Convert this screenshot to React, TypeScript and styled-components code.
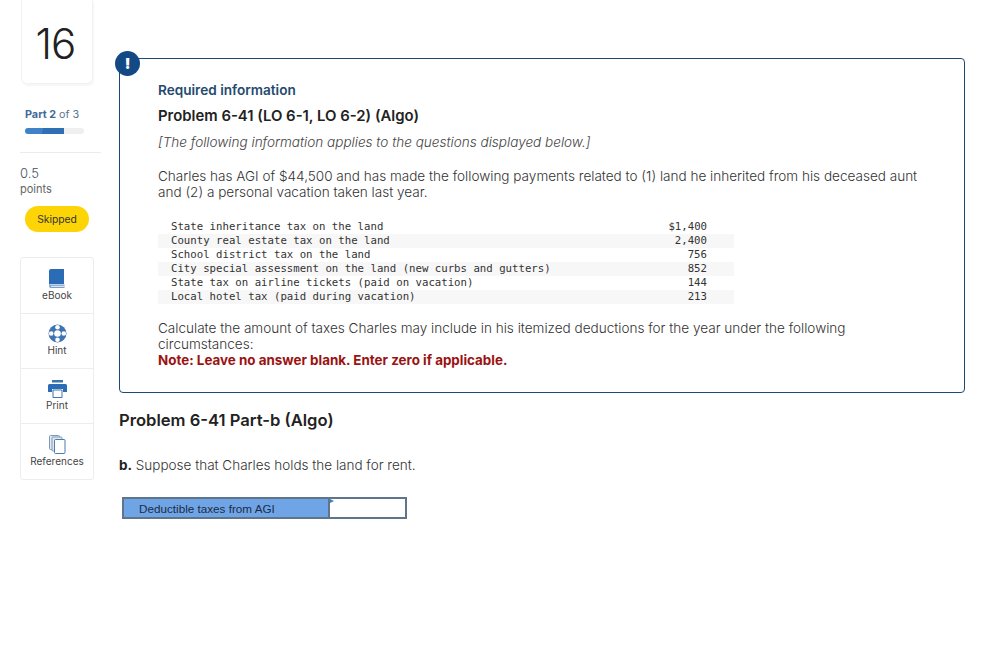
import React from "react";
import styled, { createGlobalStyle } from "styled-components";

const Global = createGlobalStyle`
  html, body { margin: 0; padding: 0; background: #fff; }
  body { font-family: "Inter", "Lato", sans-serif; color: #333; }
`;

const Page = styled.div`
  width: 1006px;
  height: 651px;
  display: flex;
  align-items: flex-start;
  overflow: hidden;
`;

const Side = styled.aside`
  width: 119px;
  flex: none;
  display: flex;
  flex-direction: column;
`;

const NumberCard = styled.div`
  width: 72px;
  height: 84px;
  margin-left: 21px;
  padding: 3px 3px 0 0;
  box-sizing: border-box;
  border: 1px solid #f2f2f2;
  border-top: none;
  border-radius: 0 0 6px 6px;
  box-shadow: 1px 2px 2px rgba(0, 0, 0, 0.04);
  display: flex;
  align-items: center;
  justify-content: center;
  font-size: 42px;
  font-weight: 300;
  color: #222;
  letter-spacing: -1px;
`;

const PartLabel = styled.div`
  margin: 24px 0 0 25px;
  font-size: 10.8px;
  line-height: 14px;
  color: #5d7590;
  b { color: #3d6a9c; font-weight: 700; }
`;

const Progress = styled.div`
  margin: 6px 0 0 25px;
  width: 59px;
  height: 6px;
  border-radius: 3px;
  background: #efefef;
  overflow: hidden;
`;

const ProgressFill = styled.div`
  height: 100%;
  background: linear-gradient(100deg, #3f82c8 0 45%, #2f6fb4 45% 100%);
`;

const Rule = styled.div`
  margin: 18px 0 0 20px;
  width: 81px;
  height: 1px;
  background: #ececec;
`;

const Points = styled.div`
  margin: 12px 0 0 20px;
  font-size: 13px;
  font-weight: 300;
  line-height: 16px;
  color: #44525f;
  span { display: block; font-size: 11px; font-weight: 400; line-height: 16px; color: #666; }
`;

const Badge = styled.div`
  margin: 9px 0 0 25px;
  width: 64px;
  height: 26px;
  border-radius: 13px;
  background: #fdd406;
  color: #333;
  font-size: 10.3px;
  display: flex;
  align-items: center;
  justify-content: center;
`;

const Tools = styled.div`
  margin: 25px 0 0 20px;
  width: 72px;
  border: 1px solid #ededed;
  border-radius: 3px;
  display: flex;
  flex-direction: column;
`;

const Tool = styled.div<{ $h: number; $pad: number }>`
  height: ${(p) => p.$h}px;
  border-top: 1px solid #ededed;
  &:first-child { border-top: none; }
  display: flex;
  flex-direction: column;
  align-items: center;
  padding-top: ${(p) => p.$pad}px;
  box-sizing: border-box;
  font-size: 10px;
  line-height: 13px;
  color: #444;
  svg { display: block; margin-bottom: 1px; }
`;

const Main = styled.main`
  width: 846px;
  flex: none;
  padding-top: 58px;
`;

const InfoBox = styled.section`
  position: relative;
  box-sizing: border-box;
  height: 335px;
  border: 1px solid #1c4a75;
  border-radius: 4px;
  padding: 22px 38px 0;
`;

const Alert = styled.div`
  position: absolute;
  left: -5px;
  top: -8px;
  width: 25px;
  height: 25px;
  border-radius: 50%;
  background: #134a86;
  color: #fff;
  font-size: 15px;
  font-weight: 900;
  display: flex;
  align-items: center;
  justify-content: center;
`;

const Required = styled.div`
  font-size: 13.6px;
  line-height: 18px;
  font-weight: 600;
  color: #254a6e;
`;

const Title = styled.h2`
  margin: 7px 0 0;
  font-size: 14.9px;
  line-height: 20px;
  font-weight: 600;
  color: #222;
`;

const Lead = styled.p`
  margin: 6px 0 0;
  font-size: 13.55px;
  font-weight: 300;
  line-height: 20px;
  font-style: italic;
  color: #444;
`;

const Para = styled.p`
  margin: 16px 0 0;
  width: 770px;
  font-size: 13.55px;
  font-weight: 300;
  line-height: 16px;
  color: #333;
`;

const Table = styled.div`
  margin-top: 20px;
  width: 576px;
  font-family: "DejaVu Sans Mono", monospace;
  font-size: 10.69px;
  line-height: 14px;
  color: #333;
`;

const Row = styled.div<{ $shade: boolean }>`
  height: 14px;
  display: flex;
  justify-content: space-between;
  padding: 0 27px 0 13px;
  background: ${(p) => (p.$shade ? "#f7f7f7" : "transparent")};
  white-space: pre;
`;

const Calc = styled(Para)`
  margin-top: 16px;
  width: 720px;
`;

const Note = styled.strong`
  display: block;
  font-size: 13.4px;
  color: #9b1212;
  font-weight: 700;
`;

const PartTitle = styled.h3`
  margin: 16px 0 0;
  font-size: 16.6px;
  line-height: 22px;
  font-weight: 600;
  color: #222;
`;

const Question = styled.p`
  margin: 25px 0 0;
  font-size: 13.5px;
  font-weight: 300;
  line-height: 18px;
  color: #333;
  b { color: #222; font-weight: 700; }
`;

const AnswerRow = styled.div`
  margin: 23px 0 0 3px;
  width: 285px;
  height: 22px;
  box-sizing: border-box;
  border: 2px solid #5f7589;
  display: flex;
`;

const AnswerLabel = styled.div`
  position: relative;
  width: 206px;
  flex: none;
  background: #6fa5e6;
  border-right: 2px solid #5f7589;
  padding-left: 15px;
  box-sizing: border-box;
  font-family: "Liberation Sans", Arial, sans-serif;
  font-size: 11.7px;
  line-height: 20px;
  color: #1d2b45;
`;

const Tick = styled.span`
  position: absolute;
  right: -6px;
  top: 0;
  width: 0;
  height: 0;
  border-top: 2.5px solid transparent;
  border-bottom: 2.5px solid transparent;
  border-left: 4px solid #3f7ec0;
`;

const rows: [string, string][] = [
  ["State inheritance tax on the land", "$1,400"],
  ["County real estate tax on the land", "2,400"],
  ["School district tax on the land", "756"],
  ["City special assessment on the land (new curbs and gutters)", "852"],
  ["State tax on airline tickets (paid on vacation)", "144"],
  ["Local hotel tax (paid during vacation)", "213"],
];

const BookIcon = () => (
  <svg width="16" height="19" viewBox="0 0 16 19">
    <path d="M0 2a2 2 0 0 1 2-2h13v15H2a2 2 0 0 0-2 1.200z" fill="#2a6cb5" />
    <path d="M0 17A2 2 0 0 1 2 15.500h13.500V19H2a2 2 0 0 1-2-2z" fill="#7b9fc9" />
    <path d="M2 16.800h13.500v.9H2z" fill="#fff" />
  </svg>
);

const HintIcon = () => (
  <svg width="19" height="19" viewBox="0 0 19 19">
    <circle cx="9.500" cy="9.500" r="9" fill="#3f74b3" />
    <circle cx="9.500" cy="9.500" r="3.300" fill="#fff" />
    <circle cx="9.500" cy="3.200" r="2.300" fill="#fff" />
    <circle cx="9.500" cy="15.800" r="2.300" fill="#fff" />
    <circle cx="3.200" cy="9.500" r="2.300" fill="#fff" />
    <circle cx="15.800" cy="9.500" r="2.300" fill="#fff" />
  </svg>
);

const PrintIcon = () => (
  <svg width="19" height="18" viewBox="0 0 19 18">
    <path d="M4 0h11v2.500H4z" fill="#3f74b3" />
    <path d="M1.500 4h16A1.500 1.500 0 0 1 19 5.500V12h-4V9H4v3H0V5.500A1.500 1.500 0 0 1 1.500 4z" fill="#2a6cb5" />
    <path d="M5 10h9v7.500H5z" fill="#fff" stroke="#3f74b3" />
  </svg>
);

const RefIcon = () => (
  <svg width="17" height="19" viewBox="0 0 17 19">
    <rect x="0.500" y="0.500" width="10" height="14" rx="1" fill="#e3e9f1" stroke="#7f9ab9" />
    <rect x="3" y="2" width="10" height="14" rx="1" fill="#e3e9f1" stroke="#7f9ab9" />
    <rect x="5.500" y="4.500" width="10.500" height="14" rx="1" fill="#fff" stroke="#4a7bb5" />
  </svg>
);

export default function App() {
  return (
    <Page>
      <Global />
      <Side>
        <NumberCard>16</NumberCard>
        <PartLabel>
          <b>Part 2</b> of 3
        </PartLabel>
        <Progress>
          <ProgressFill style={{ width: `${(2 / 3) * 100}%` }} />
        </Progress>
        <Rule />
        <Points>
          0.5
          <span>points</span>
        </Points>
        <Badge>Skipped</Badge>
        <Tools>
          <Tool $h={55} $pad={11}><BookIcon />eBook</Tool>
          <Tool $h={55} $pad={10}><HintIcon />Hint</Tool>
          <Tool $h={55} $pad={11}><PrintIcon />Print</Tool>
          <Tool $h={56} $pad={11}><RefIcon />References</Tool>
        </Tools>
      </Side>
      <Main>
        <InfoBox>
          <Alert>!</Alert>
          <Required>Required information</Required>
          <Title>Problem 6-41 (LO 6-1, LO 6-2) (Algo)</Title>
          <Lead>[The following information applies to the questions displayed below.]</Lead>
          <Para>
            Charles has AGI of $44,500 and has made the following payments related to (1) land he inherited from his deceased aunt and (2) a personal vacation taken last year.
          </Para>
          <Table>
            {rows.map(([label, value], i) => (
              <Row key={label} $shade={i % 2 === 1}>
                <span>{label}</span>
                <span>{value}</span>
              </Row>
            ))}
          </Table>
          <Calc>
            Calculate the amount of taxes Charles may include in his itemized deductions for the year under the following circumstances:
            <Note>Note: Leave no answer blank. Enter zero if applicable.</Note>
          </Calc>
        </InfoBox>
        <PartTitle>Problem 6-41 Part-b (Algo)</PartTitle>
        <Question>
          <b>b.</b> Suppose that Charles holds the land for rent.
        </Question>
        <AnswerRow>
          <AnswerLabel>
            Deductible taxes from AGI
            <Tick />
          </AnswerLabel>
        </AnswerRow>
      </Main>
    </Page>
  );
}
